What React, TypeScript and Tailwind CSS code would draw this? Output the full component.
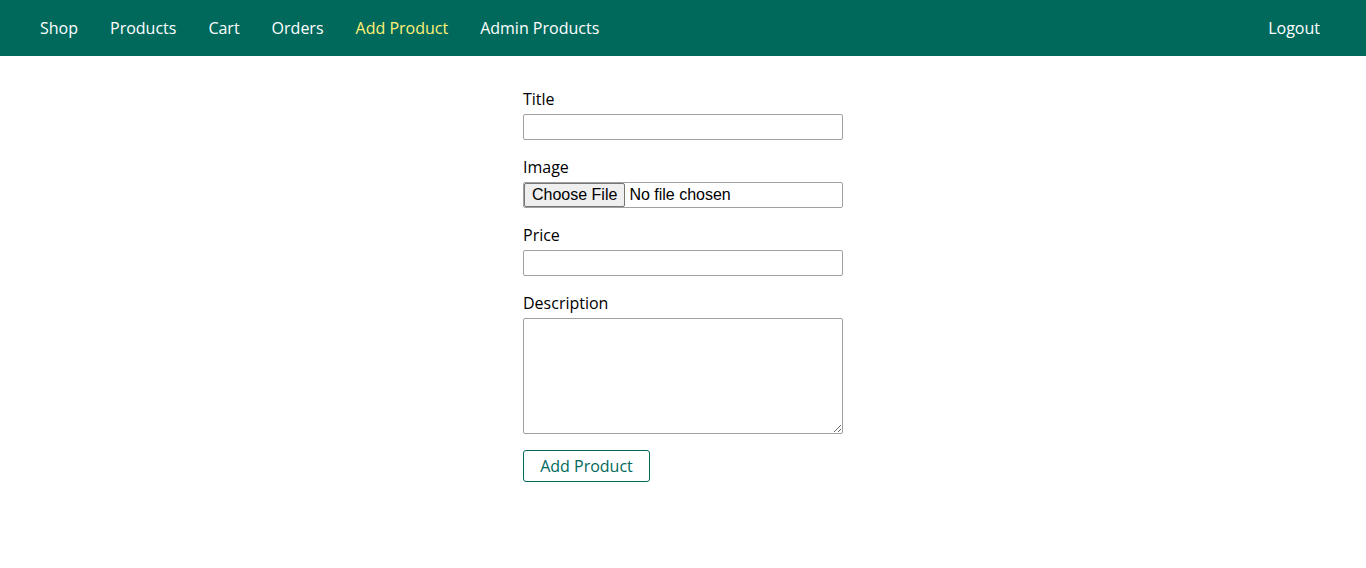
import React from 'react';

const links = ['Shop', 'Products', 'Cart', 'Orders', 'Add Product', 'Admin Products'];

export default function App() {
  return (
    <div className="min-h-screen bg-white text-black" style={{ fontFamily: '"Open Sans", sans-serif' }}>
      <header className="flex h-14 w-full items-center bg-[#00695c] px-6">
        <nav className="flex h-full w-full items-center">
          <ul className="flex h-full items-center">
            {links.map((l) => (
              <li key={l} className="mx-4">
                <a href="#" className={`text-base ${l === 'Add Product' ? 'text-[#fff176]' : 'text-white'}`}>
                  {l}
                </a>
              </li>
            ))}
          </ul>
          <ul className="ml-auto flex h-full items-center">
            <li className="mx-4 pr-[6px]">
              <button className="text-base text-white">Logout</button>
            </li>
          </ul>
        </nav>
      </header>

      <main className="p-4">
        <form className="mx-auto w-80 pt-4">
          <div>
            <label className="mb-1 block h-[22px] leading-[22px]">Title</label>
            <input type="text" className="block h-[26px] w-full rounded-[2px] border border-[#a1a1a1] px-[2px]" />
          </div>
          <div className="mt-4">
            <label className="mb-1 block h-[22px] leading-[22px]">Image</label>
            <input
              type="file"
              className="block h-[26px] w-full rounded-[2px] border border-[#a1a1a1] text-base leading-[22px] file:mr-[4px] file:h-[24px] file:rounded-[2px] file:border file:border-[#767676] file:bg-[#efefef] file:px-[7px] file:text-black"
              style={{ fontFamily: '"Liberation Sans", Arial, sans-serif' }}
            />
          </div>
          <div className="mt-4">
            <label className="mb-1 block h-[22px] leading-[22px]">Price</label>
            <input type="number" className="block h-[26px] w-full rounded-[2px] border border-[#a1a1a1] px-[2px]" />
          </div>
          <div className="mt-4">
            <label className="mb-1 block h-[22px] leading-[22px]">Description</label>
            <textarea rows={5} className="block h-[116px] w-full rounded-[2px] border border-[#a1a1a1] px-[2px]" />
          </div>
          <button
            type="submit"
            className="mt-4 h-8 w-[127px] rounded-[3px] border border-[#00695c] text-base text-[#00695c]"
          >
            Add Product
          </button>
        </form>
      </main>
    </div>
  );
}
